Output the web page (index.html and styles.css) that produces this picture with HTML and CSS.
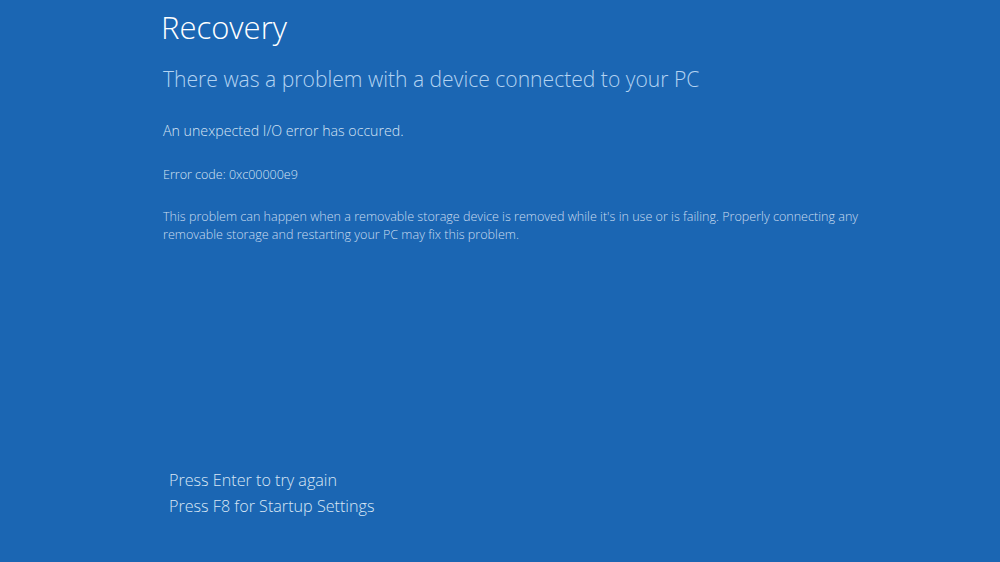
FILE: index.html
```html
<!DOCTYPE html>
<html lang="en">
<head>
<meta charset="utf-8">
<title>Recovery</title>
<link rel="stylesheet" href="styles.css">
</head>
<body>
<main class="screen">
  <section class="top">
    <h1 class="title">Recovery</h1>
    <h2 class="subtitle">There was a problem with a device connected to your PC</h2>
    <p class="message">An unexpected I/O error has occured.</p>
    <p class="code">Error code: 0xc00000e9</p>
    <p class="detail">This problem can happen when a removable storage device is removed while it's in use or is failing. Properly connecting any removable storage and restarting your PC may fix this problem.</p>
  </section>
  <section class="actions">
    <p class="action">Press Enter to try again</p>
    <p class="action">Press F8 for Startup Settings</p>
  </section>
</main>
</body>
</html>
```
FILE: styles.css
```css
html, body {
  margin: 0;
  padding: 0;
  height: 100%;
}
body {
  background: #1b66b3;
  font-family: "Open Sans", "Noto Sans", sans-serif;
  overflow: hidden;
}
.screen {
  height: 562px;
  box-sizing: border-box;
  display: flex;
  flex-direction: column;
  padding: 7px 0 0 161px;
}
.top {
  display: flex;
  flex-direction: column;
}
.title {
  margin: 0;
  font-weight: 300;
  font-size: 31px;
  line-height: 40px;
  color: #ffffff;
}
.subtitle {
  margin: 18px 0 0 2px;
  font-weight: 300;
  font-size: 21.1px;
  line-height: 28px;
  color: #b3d3f2;
}
.message {
  margin: 28px 0 0 2px;
  font-weight: 300;
  font-size: 14.2px;
  line-height: 20px;
  color: #d6e4f3;
}
.code {
  margin: 25px 0 0 2px;
  font-weight: 300;
  font-size: 12.5px;
  line-height: 18px;
  color: #d6e4f3;
}
.detail {
  margin: 24px 0 0 2px;
  width: 740px;
  font-weight: 300;
  font-size: 12.57px;
  line-height: 18px;
  color: #c9dcf0;
}
.actions {
  margin-top: auto;
  padding: 0 0 43px 8px;
}
.action {
  margin: 0;
  font-weight: 300;
  font-size: 16.15px;
  line-height: 26px;
  color: #d9e7f5;
}
```
